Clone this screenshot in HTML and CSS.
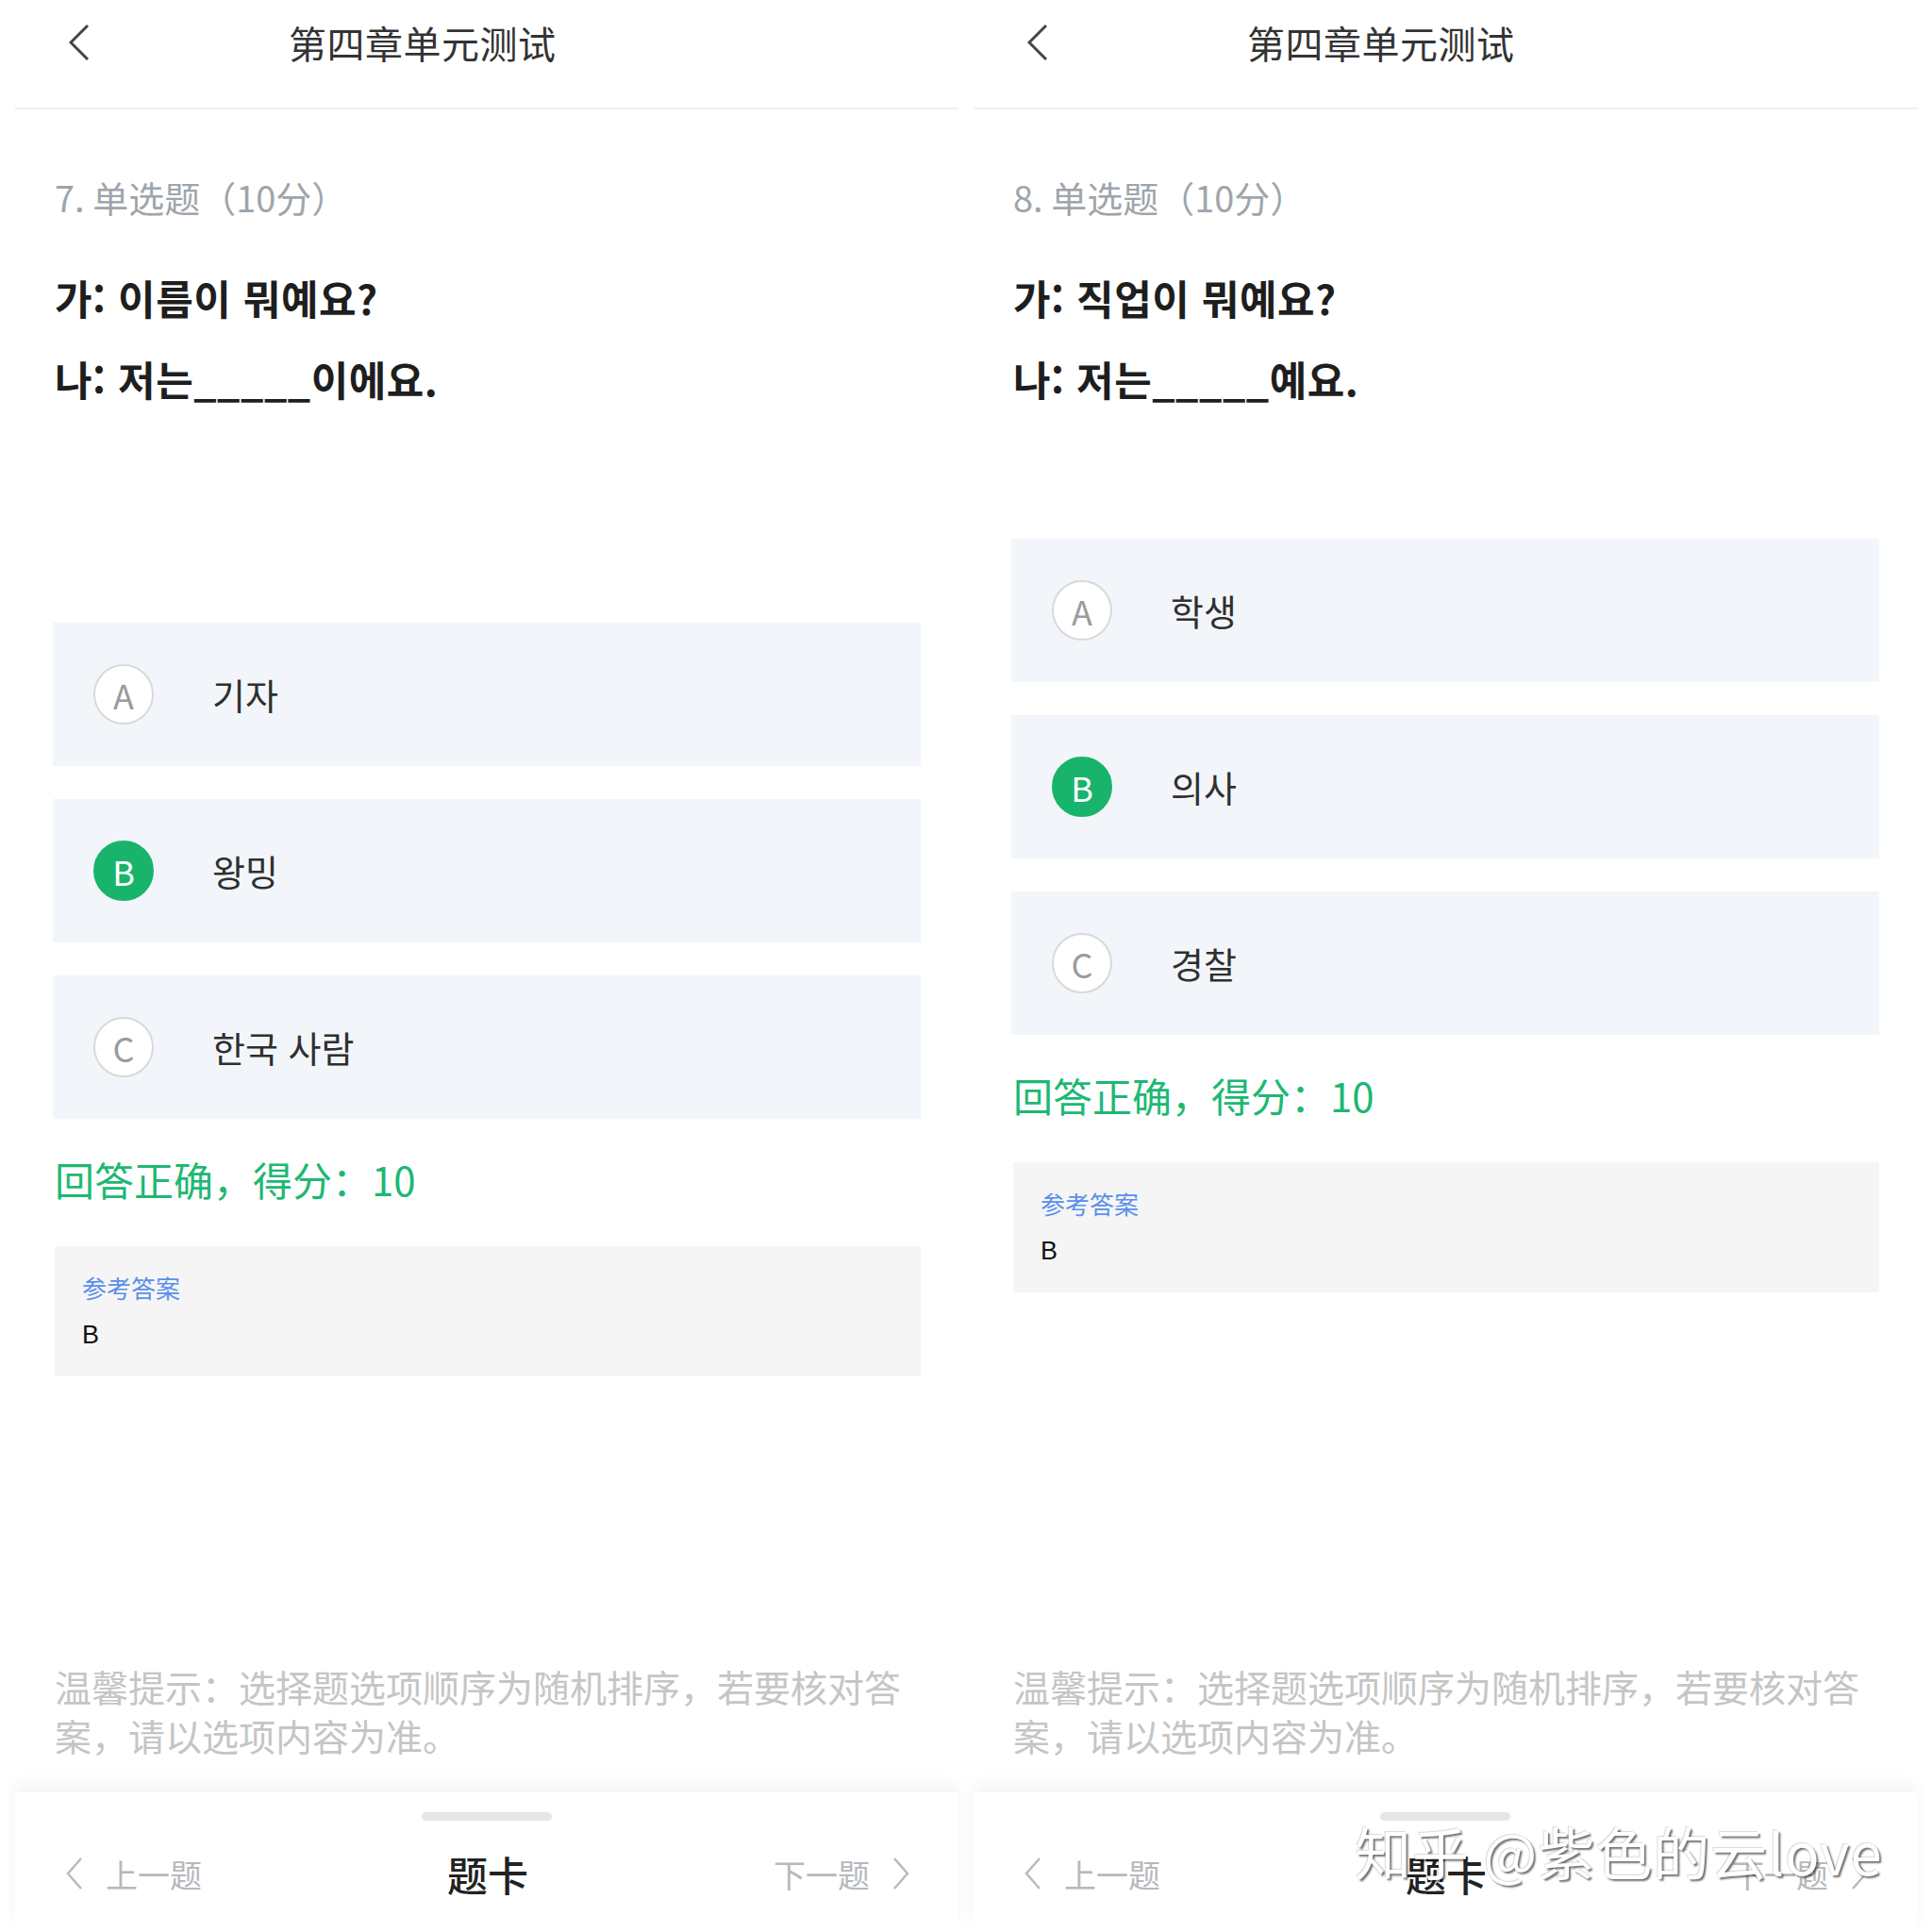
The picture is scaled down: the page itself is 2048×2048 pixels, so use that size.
FILE: index.html
```html
<!DOCTYPE html>
<html lang="zh-CN">
<head>
<meta charset="utf-8">
<title>第四章单元测试</title>
<link rel="stylesheet" href="styles.css">
</head>
<body>
<div class="screens">
  <section class="panel">
    <header class="topbar">
      <svg class="back" width="22" height="40" viewBox="0 0 22 40"><polyline points="20,2 2,20 20,38" fill="none" stroke="#444" stroke-width="3" stroke-linejoin="miter"/></svg>
      <h1 class="title">第四章单元测试</h1>
    </header>
    <div class="content">
      <div class="qtype">7. 单选题（10分）</div>
      <div class="question" lang="ko">
        <p>가: 이름이 뭐예요?</p>
        <p>나: 저는_____이에요.</p>
      </div>
      <ul class="options options-far">
        <li class="option"><span class="mark">A</span><span class="otext" lang="ko">기자</span></li>
        <li class="option"><span class="mark mark-on">B</span><span class="otext" lang="ko">왕밍</span></li>
        <li class="option"><span class="mark">C</span><span class="otext" lang="ko">한국 사람</span></li>
      </ul>
      <div class="result">回答正确，得分：10</div>
      <div class="ref">
        <div class="ref-label">参考答案</div>
        <div class="ref-value">B</div>
      </div>
      <p class="tip">温馨提示：选择题选项顺序为随机排序，若要核对答案，请以选项内容为准。</p>
    </div>
    <footer class="bottombar">
      <div class="handle"></div>
      <nav class="nav">
        <span class="nav-side"><svg class="nav-arrow" width="18" height="36" viewBox="0 0 18 36"><polyline points="16,2 2,18 16,34" fill="none" stroke="#b7bbbf" stroke-width="2.5"/></svg>上一题</span>
        <span class="nav-card">题卡</span>
        <span class="nav-side">下一题<svg class="nav-arrow" width="18" height="36" viewBox="0 0 18 36"><polyline points="2,2 16,18 2,34" fill="none" stroke="#b7bbbf" stroke-width="2.5"/></svg></span>
      </nav>
    </footer>
  </section>

  <section class="panel panel-right">
    <header class="topbar">
      <svg class="back" width="22" height="40" viewBox="0 0 22 40"><polyline points="20,2 2,20 20,38" fill="none" stroke="#444" stroke-width="3" stroke-linejoin="miter"/></svg>
      <h1 class="title">第四章单元测试</h1>
    </header>
    <div class="content">
      <div class="qtype">8. 单选题（10分）</div>
      <div class="question" lang="ko">
        <p>가: 직업이 뭐예요?</p>
        <p>나: 저는_____예요.</p>
      </div>
      <ul class="options options-near">
        <li class="option"><span class="mark">A</span><span class="otext" lang="ko">학생</span></li>
        <li class="option"><span class="mark mark-on">B</span><span class="otext" lang="ko">의사</span></li>
        <li class="option"><span class="mark">C</span><span class="otext" lang="ko">경찰</span></li>
      </ul>
      <div class="result">回答正确，得分：10</div>
      <div class="ref">
        <div class="ref-label">参考答案</div>
        <div class="ref-value">B</div>
      </div>
      <p class="tip">温馨提示：选择题选项顺序为随机排序，若要核对答案，请以选项内容为准。</p>
    </div>
    <footer class="bottombar">
      <div class="handle"></div>
      <nav class="nav">
        <span class="nav-side"><svg class="nav-arrow" width="18" height="36" viewBox="0 0 18 36"><polyline points="16,2 2,18 16,34" fill="none" stroke="#b7bbbf" stroke-width="2.5"/></svg>上一题</span>
        <span class="nav-card">题卡</span>
        <span class="nav-side">下一题<svg class="nav-arrow" width="18" height="36" viewBox="0 0 18 36"><polyline points="2,2 16,18 2,34" fill="none" stroke="#b7bbbf" stroke-width="2.5"/></svg></span>
      </nav>
    </footer>
    <div class="watermark">知乎 @紫色的云love</div>
  </section>
</div>
</body>
</html>
```

FILE: styles.css
```css
* { box-sizing: border-box; }

html, body {
  margin: 0;
  padding: 0;
  background: #ffffff;
}

body {
  font-family: "Noto Sans CJK SC", "Noto Sans CJK KR", sans-serif;
  color: #333333;
}

[lang="ko"] {
  font-family: "Noto Sans CJK KR", "Noto Sans CJK SC", sans-serif;
}

.screens {
  display: flex;
  gap: 16px;
  padding-left: 16px;
  width: 2048px;
  height: 2048px;
}

.panel {
  position: relative;
  width: 1000px;
  height: 2048px;
  display: flex;
  flex-direction: column;
  background: #ffffff;
}

/* header */
.topbar {
  display: flex;
  align-items: center;
  height: 116px;
  padding: 0 0 24px 57px;
  border-bottom: 2px solid #f0f0f0;
}

.back {
  display: block;
  flex: none;
}

.title {
  margin: 0 0 0 211px;
  font-size: 40px;
  font-weight: 400;
  line-height: 56px;
  letter-spacing: 0.5px;
  color: #333333;
}

/* body */
.content {
  flex: 1;
  display: flex;
  flex-direction: column;
  padding: 0 40px 0 42px;
}

.qtype {
  margin-top: 67px;
  font-size: 38px;
  line-height: 52px;
  color: #9ea5ac;
}

.question {
  margin-top: 37px;
}

.question p {
  margin: 0;
  font-size: 43px;
  line-height: 86px;
  font-weight: 700;
  letter-spacing: 0.5px;
  color: #1e1e1e;
}

.options {
  list-style: none;
  margin: 0;
  padding: 0;
  display: flex;
  flex-direction: column;
  gap: 35px;
}

.options-far { margin-top: 216px; }
.options-near { margin-top: 127px; }

.option {
  display: flex;
  align-items: center;
  height: 152px;
  margin-left: -2px;
  padding-left: 43px;
  background: #f2f6fa;
}

.mark {
  flex: none;
  width: 64px;
  height: 64px;
  border-radius: 50%;
  border: 2px solid #d9d9d9;
  background: #ffffff;
  display: flex;
  align-items: center;
  justify-content: center;
  font-size: 36px;
  color: #9b9b9b;
  line-height: 1;
}

.mark-on {
  background: #19b46c;
  border-color: #19b46c;
  color: #ffffff;
}

.otext {
  margin-left: 62px;
  font-size: 38px;
  line-height: 52px;
  color: #2f2f2f;
}

.result {
  margin-top: 34px;
  font-size: 42px;
  line-height: 60px;
  color: #1db873;
}

.ref {
  margin-top: 41px;
  height: 138px;
  padding: 26px 29px 0;
  background: #f5f5f5;
}

.ref-label {
  font-size: 26px;
  line-height: 36px;
  color: #5b8fe9;
}

.ref-value {
  margin-top: 14px;
  font-family: "Liberation Sans", sans-serif;
  font-size: 27px;
  line-height: 36px;
  color: #111111;
}

.tip {
  margin: auto 0 35px;
  width: 905px;
  font-size: 39px;
  line-height: 52px;
  color: #c5c5c5;
}

/* bottom bar */
.bottombar {
  flex: none;
  height: 148px;
  display: flex;
  flex-direction: column;
  align-items: center;
  padding-top: 21px;
  background: #ffffff;
  box-shadow: 0 -10px 16px rgba(0, 0, 0, 0.045);
}

.handle {
  width: 138px;
  height: 9px;
  border-radius: 5px;
  background: #e6e6e6;
}

.nav {
  align-self: stretch;
  display: flex;
  align-items: center;
  justify-content: space-between;
  margin-top: 26px;
  padding: 0 52px 0 54px;
  height: 60px;
}

.nav-side {
  display: flex;
  align-items: center;
  gap: 24px;
  font-size: 34px;
  color: #b5b9bd;
  width: 150px;
}

.nav-side:last-child {
  justify-content: flex-end;
}

.nav-arrow {
  display: block;
  flex: none;
}

.nav-card {
  font-size: 43px;
  font-weight: 500;
  color: #222222;
}

.watermark {
  position: absolute;
  left: 404px;
  top: 1926px;
  font-size: 60px;
  line-height: 72px;
  letter-spacing: 1px;
  color: #ffffff;
  white-space: nowrap;
  text-shadow: 2px 2px 2px rgba(0, 0, 0, 0.55), -1px -1px 1px rgba(0, 0, 0, 0.15);
}
```
